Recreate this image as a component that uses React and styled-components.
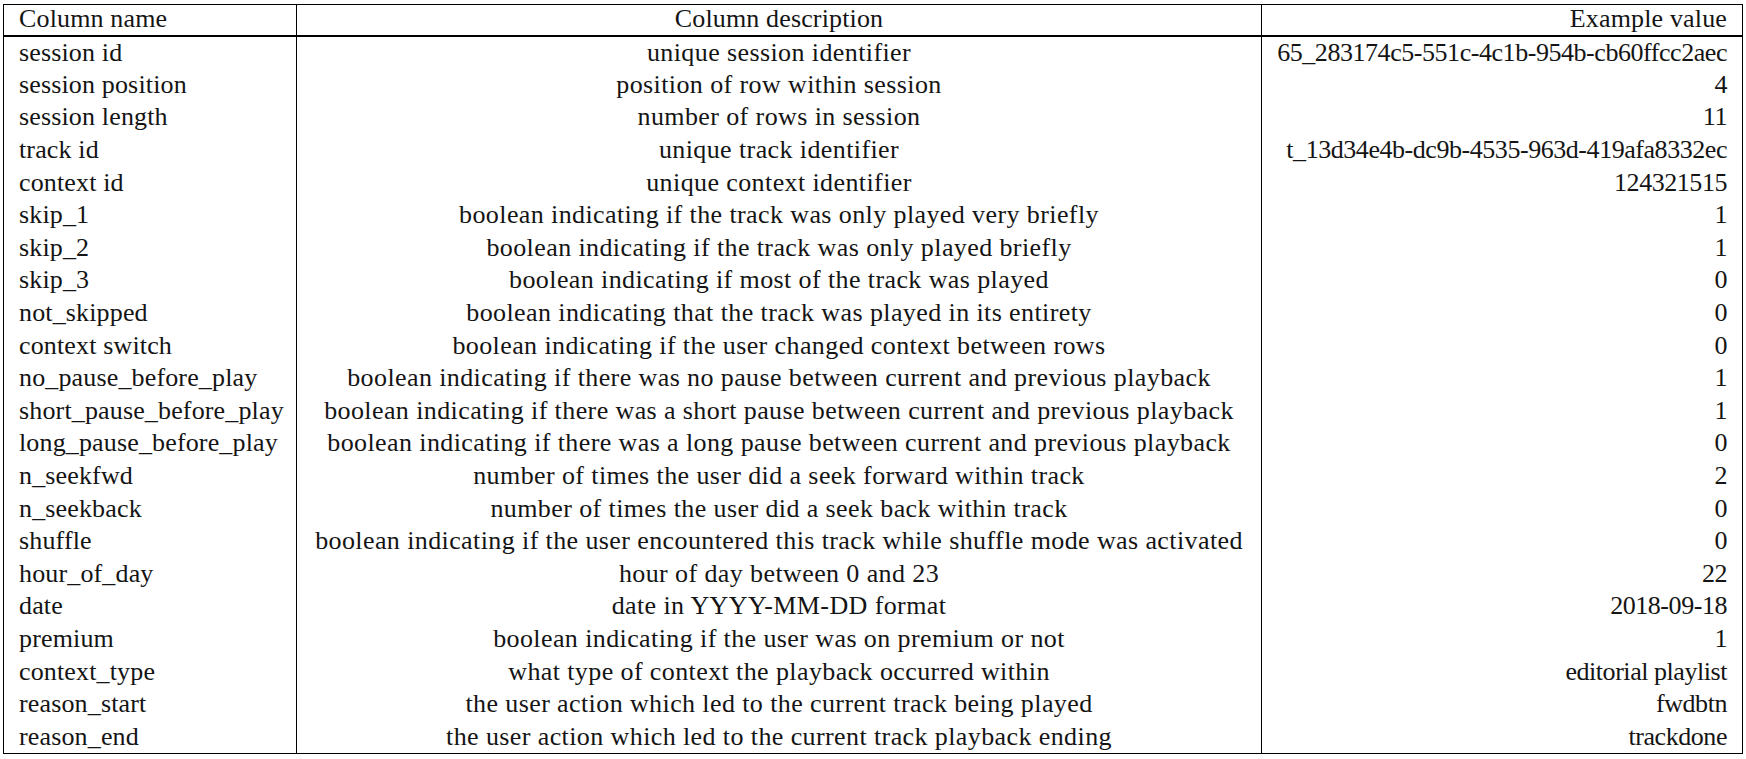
import styled, { createGlobalStyle } from "styled-components";

const GlobalStyle = createGlobalStyle`
    html, body {
        margin: 0;
        padding: 0;
        background: #fff;
    }
`

const rows = [
    ["session id", "unique session identifier", "65_283174c5-551c-4c1b-954b-cb60ffcc2aec"],
    ["session position", "position of row within session", "4"],
    ["session length", "number of rows in session", "11"],
    ["track id", "unique track identifier", "t_13d34e4b-dc9b-4535-963d-419afa8332ec"],
    ["context id", "unique context identifier", "124321515"],
    ["skip_1", "boolean indicating if the track was only played very briefly", "1"],
    ["skip_2", "boolean indicating if the track was only played briefly", "1"],
    ["skip_3", "boolean indicating if most of the track was played", "0"],
    ["not_skipped", "boolean indicating that the track was played in its entirety", "0"],
    ["context switch", "boolean indicating if the user changed context between rows", "0"],
    ["no_pause_before_play", "boolean indicating if there was no pause between current and previous playback", "1"],
    ["short_pause_before_play", "boolean indicating if there was a short pause between current and previous playback", "1"],
    ["long_pause_before_play", "boolean indicating if there was a long pause between current and previous playback", "0"],
    ["n_seekfwd", "number of times the user did a seek forward within track", "2"],
    ["n_seekback", "number of times the user did a seek back within track", "0"],
    ["shuffle", "boolean indicating if the user encountered this track while shuffle mode was activated", "0"],
    ["hour_of_day", "hour of day between 0 and 23", "22"],
    ["date", "date in YYYY-MM-DD format", "2018-09-18"],
    ["premium", "boolean indicating if the user was on premium or not", "1"],
    ["context_type", "what type of context the playback occurred within", "editorial playlist"],
    ["reason_start", "the user action which led to the current track being played", "fwdbtn"],
    ["reason_end", "the user action which led to the current track playback ending", "trackdone"],
];

const App = () => {
    return (
        <Page>
            <GlobalStyle />
            <Table>
                <colgroup>
                    <col style={{ width: 293 }} />
                    <col style={{ width: 965 }} />
                    <col style={{ width: 481 }} />
                </colgroup>
                <thead>
                    <HeadRow>
                        <Cell align="left">Column name</Cell>
                        <Cell align="center">Column description</Cell>
                        <Cell align="right">Example value</Cell>
                    </HeadRow>
                </thead>
                <tbody>
                    {rows.map(([name, desc, value]) => (
                        <Row key={name}>
                            <Cell align="left">{name}</Cell>
                            <Cell align="center" spacing="0.4px">{desc}</Cell>
                            <Cell align="right" spacing="-0.45px">{value}</Cell>
                        </Row>
                    ))}
                </tbody>
            </Table>
        </Page>
    );
}

export default App;

const Page = styled.div`
    padding: 4px 0 0 3px;
    font-family: "Liberation Serif", "DejaVu Serif", serif;
    color: #141414;
`

const Table = styled.table`
    width: 1739px;
    table-layout: fixed;
    border-collapse: collapse;
    border: 1px solid #000;
    font-size: 26px;
`

const HeadRow = styled.tr`
    height: 31px;
    border-bottom: 2px solid #000;
    td {
        padding-top: 0;
        padding-bottom: 2px;
    }
`

const Row = styled.tr`
    height: 32.6px;
`

const Cell = styled.td`
    text-align: ${(p) => p.align};
    letter-spacing: ${(p) => p.spacing || "0.15px"};
    padding: 0 15px;
    line-height: 28px;
    white-space: nowrap;
    border-left: 1px solid #000;
    border-right: 1px solid #000;
    vertical-align: middle;
`
